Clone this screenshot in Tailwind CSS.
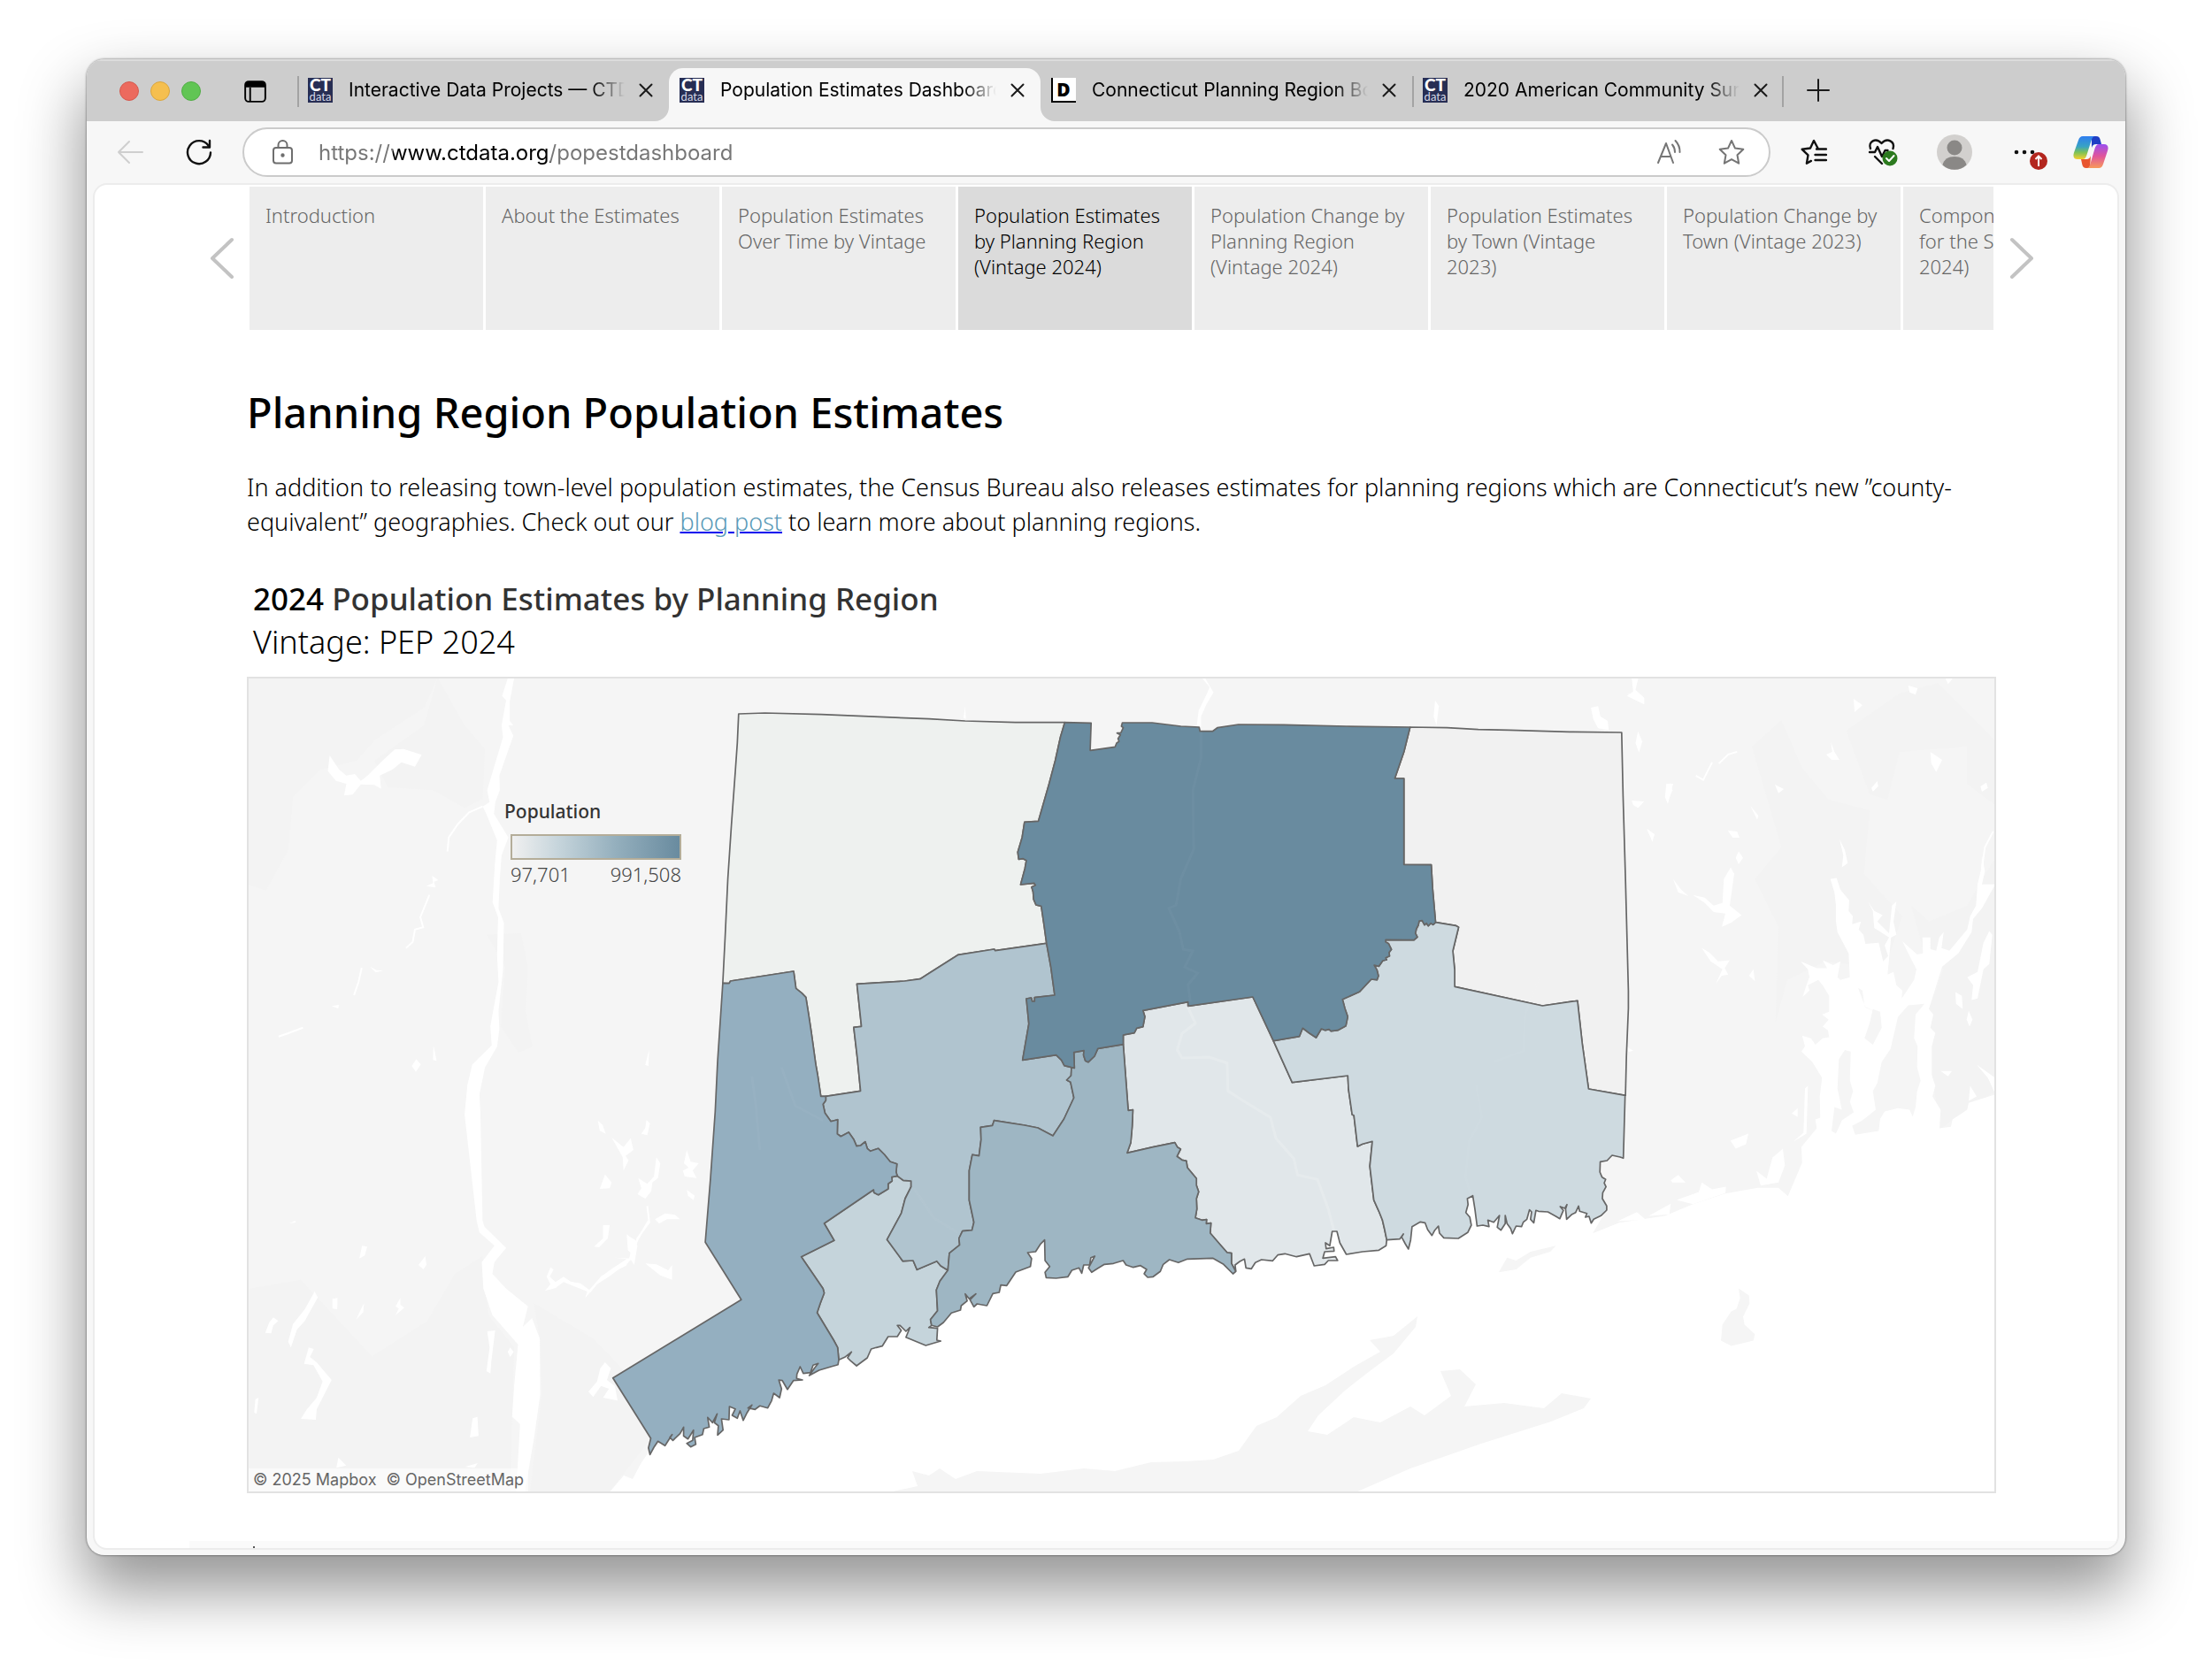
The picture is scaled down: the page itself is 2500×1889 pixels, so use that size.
<!DOCTYPE html>
<html lang="en">
<head>
    <meta charset="UTF-8">
    <meta name="viewport" content="width=device-width, initial-scale=1.0">
    <title>Population Estimates Dashboard</title>
    <script src="https://cdn.jsdelivr.net/npm/@tailwindcss/browser@4"></script>
</head>
<body class="bg-white min-h-screen px-[98px] pt-[67px] pb-[130px] text-black font-['Noto_Sans',sans-serif]">

    <!-- Shared icons -->
    <svg class="hidden" aria-hidden="true">
        <symbol id="icon-ctdata" viewBox="0 0 28 28">
            <rect width="28" height="28" fill="#272e54"/>
            <text x="14" y="15" text-anchor="middle" font-family="Lato, sans-serif" font-weight="900" font-size="19" fill="#fff">CT</text>
            <text x="14" y="26" text-anchor="middle" font-family="Lato, sans-serif" font-size="13" fill="#d5d8e6">data</text>
        </symbol>
        <symbol id="icon-close" viewBox="0 0 16 16">
            <path d="M1.5 1.5l13 13M14.5 1.5l-13 13" fill="none" stroke="#1a1a1a" stroke-width="2" stroke-linecap="round"/>
        </symbol>
    </svg>

    <div class="rounded-[20px] bg-[#f7f7f7] overflow-hidden shadow-[0_0_2px_1px_rgba(0,0,0,0.28),0_36px_70px_4px_rgba(0,0,0,0.42)]">

        <!-- Tab strip -->
        <header class="flex h-[70px] bg-[#cdcdcd] border-t-2 border-[#dcdcdc] font-[Inter,sans-serif] text-[21px]">
            <div class="flex items-center w-[238px] shrink-0 pl-[37px] gap-[13px]">
                <button aria-label="Close window" class="size-[22px] rounded-full bg-[#ec6a5e] border border-[#d5594e]"></button>
                <button aria-label="Minimize window" class="size-[22px] rounded-full bg-[#f5bf4f] border border-[#dba63c]"></button>
                <button aria-label="Zoom window" class="size-[22px] rounded-full bg-[#61c554] border border-[#51ad45]"></button>
                <button aria-label="Tab actions" class="ml-9">
                    <svg class="size-[25px]" viewBox="0 0 26 26" fill="none">
                        <rect x="1.2" y="1.2" width="23.6" height="23.6" rx="4" stroke="#000" stroke-width="2"/>
                        <path d="M1 8V5a4 4 0 0 1 4-4h16a4 4 0 0 1 4 4v3z" fill="#000"/>
                        <path d="M7 8v17" stroke="#000" stroke-width="2"/>
                    </svg>
                </button>
            </div>

            <nav class="flex flex-1 min-w-0" aria-label="Open tabs">
                <div class="relative flex items-center w-[420px] pl-3 pr-[18px] pb-0.5">
                    <span class="absolute left-0 top-[17px] w-0.5 h-[35px] bg-[#a3a3a3]"></span>
                    <svg class="size-7 shrink-0"><use href="#icon-ctdata"/></svg>
                    <a href="#" class="ml-[18px] flex-1 overflow-hidden whitespace-nowrap [mask-image:linear-gradient(to_right,black_88%,transparent)]">Interactive Data Projects — CTData</a>
                    <button aria-label="Close tab" class="ml-4"><svg class="size-4"><use href="#icon-close"/></svg></button>
                </div>
                <div class="relative flex items-center w-[420px] pl-3 pr-[18px] mt-2 pb-[10px] rounded-t-2xl bg-[#f7f7f7]">
                    <svg class="absolute -left-4 bottom-0 size-4" viewBox="0 0 16 16"><path d="M16 0v16H0A16 16 0 0 0 16 0z" fill="#f7f7f7"/></svg>
                    <svg class="absolute -right-4 bottom-0 size-4" viewBox="0 0 16 16"><path d="M0 0v16h16A16 16 0 0 1 0 0z" fill="#f7f7f7"/></svg>
                    <svg class="size-7 shrink-0"><use href="#icon-ctdata"/></svg>
                    <a href="#" aria-current="page" class="ml-[18px] flex-1 overflow-hidden whitespace-nowrap [mask-image:linear-gradient(to_right,black_88%,transparent)]">Population Estimates Dashboard</a>
                    <button aria-label="Close tab" class="ml-4"><svg class="size-4"><use href="#icon-close"/></svg></button>
                </div>
                <div class="flex items-center w-[420px] pl-3 pr-[18px] pb-0.5">
                    <svg class="size-7 shrink-0" viewBox="0 0 28 28">
                        <rect width="28" height="28" fill="#fff"/>
                        <path d="M0 0h2v26h26v2H0z" fill="#000"/>
                        <text x="14" y="21" text-anchor="middle" font-family="Open Sans, sans-serif" font-weight="800" font-size="21">D</text>
                    </svg>
                    <a href="#" class="ml-[18px] flex-1 overflow-hidden whitespace-nowrap [mask-image:linear-gradient(to_right,black_88%,transparent)]">Connecticut Planning Region Boundaries</a>
                    <button aria-label="Close tab" class="ml-4"><svg class="size-4"><use href="#icon-close"/></svg></button>
                </div>
                <div class="relative flex items-center w-[420px] pl-3 pr-[18px] pb-0.5">
                    <span class="absolute left-0 top-[17px] w-0.5 h-[35px] bg-[#a3a3a3]"></span>
                    <span class="absolute right-0 top-[17px] w-0.5 h-[35px] bg-[#a3a3a3]"></span>
                    <svg class="size-7 shrink-0"><use href="#icon-ctdata"/></svg>
                    <a href="#" class="ml-[18px] flex-1 overflow-hidden whitespace-nowrap [mask-image:linear-gradient(to_right,black_88%,transparent)]">2020 American Community Survey</a>
                    <button aria-label="Close tab" class="ml-4"><svg class="size-4"><use href="#icon-close"/></svg></button>
                </div>
                <button aria-label="New tab" class="ml-[26px] mb-0.5">
                    <svg class="size-[26px]" viewBox="0 0 26 26"><path d="M13 1v24M1 13h24" stroke="#1a1a1a" stroke-width="2" stroke-linecap="round"/></svg>
                </button>
            </nav>
        </header>

        <!-- Toolbar -->
        <div class="flex items-center h-[70px] pl-[34px] pr-[19px]">
            <button aria-label="Back" class="shrink-0">
                <svg class="size-[30px]" viewBox="0 0 30 30" fill="none" stroke="#cfcfcf" stroke-width="2" stroke-linecap="round" stroke-linejoin="round"><path d="M29 15H2M14 3L2 15l12 12"/></svg>
            </button>
            <button aria-label="Refresh" class="ml-12 shrink-0">
                <svg class="size-[30px]" viewBox="0 0 30 30" fill="none" stroke="#111" stroke-width="2.4" stroke-linecap="round" stroke-linejoin="round"><path d="M28 15.500A13 13 0 1 1 25.500 7.500M27 2v7.500h-7.500"/></svg>
            </button>
            <div class="ml-[34px] flex flex-1 items-center h-14 rounded-full border-2 border-[#cbcbcb] bg-white pl-[30px] pr-[27px]">
                <svg class="size-7 shrink-0" viewBox="0 0 28 28" fill="none" stroke="#6e6e6e" stroke-width="2">
                    <rect x="3" y="9" width="21" height="17.500" rx="3"/><path d="M8.500 9V6a5 5 0 0 1 10 0v3"/><circle cx="13.500" cy="17.500" r="1.200" fill="#6e6e6e"/>
                </svg>
                <input type="text" aria-label="Address" value="https://www.ctdata.org/popestdashboard" class="ml-[26px] pt-0.5 flex-1 min-w-0 outline-none font-[Inter,sans-serif] text-[24px] text-transparent bg-clip-text bg-[linear-gradient(to_right,#767676_84px,#000_84px,#000_262px,#767676_262px)]">
                <button aria-label="Read aloud">
                    <svg class="size-[30px]" viewBox="0 0 30 30" fill="none" stroke="#757575" stroke-width="2" stroke-linecap="round" stroke-linejoin="round"><path d="M2 27L11 5l8 22M5 20h11.500M18 6.500a13 13 0 0 1 3 8.500M21.500 2a18 18 0 0 1 5 13"/></svg>
                </button>
                <button aria-label="Add to favorites" class="ml-10">
                    <svg class="size-[30px]" viewBox="0 0 30 30" fill="none" stroke="#757575" stroke-width="2" stroke-linejoin="round"><path d="M15 2l4 8.600 9.300 1.200-6.800 6.500 1.700 9.400-8.200-4.600-8.200 4.600 1.700-9.400-6.800-6.500 9.300-1.200z"/></svg>
                </button>
            </div>
            <button aria-label="Favorites" class="ml-[34px] shrink-0">
                <svg class="size-[30px]" viewBox="0 0 30 30" fill="none" stroke="#111" stroke-width="2.400" stroke-linecap="round" stroke-linejoin="round"><path d="M19.500 10.500L15 2l-4 8.500-9.300 1.300 6.800 6.600-1.600 9.300 5-2.800M18 11.500h11M16.500 18H29M16.500 24H29"/></svg>
            </button>
            <button aria-label="Browser essentials" class="ml-[46px] shrink-0">
                <svg class="size-[34px]" viewBox="0 0 34 34" fill="none" stroke="#111" stroke-width="2.400" stroke-linecap="round" stroke-linejoin="round">
                    <path d="M3 13C0 5 9 0 15.500 7 22 0 31 5 28.500 13M8 22l8 8M2 17h6l3-6 5 11 3.500-7h3"/>
                    <circle cx="25" cy="24" r="8.500" fill="#2c7a1f" stroke="none"/><path d="M21 24l3 3 5.500-6" stroke="#fff" stroke-width="2"/>
                </svg>
            </button>
            <button aria-label="Profile" class="ml-11 shrink-0">
                <svg class="size-10" viewBox="0 0 40 40"><circle cx="20" cy="20" r="20" fill="#d2d0ce"/><circle cx="20" cy="15" r="8.500" fill="#8a8886"/><path d="M6.500 34.500C8 28 13 25 20 25s12 3 13.500 9.500A20 20 0 0 1 6.500 34.500z" fill="#8a8886"/></svg>
            </button>
            <button aria-label="Settings and more" class="ml-[46px] shrink-0">
                <svg class="size-10" viewBox="0 0 40 40"><g fill="#111"><circle cx="4" cy="20" r="2.300"/><circle cx="13" cy="20" r="2.300"/><circle cx="22" cy="20" r="2.300"/></g><circle cx="29" cy="30" r="10" fill="#b3261e"/><path d="M29 36V24.500M25.500 28l3.500-3.500 3.500 3.500" fill="none" stroke="#fff" stroke-width="2"/></svg>
            </button>
            <button aria-label="Copilot" class="ml-7 shrink-0">
                <svg class="size-10" viewBox="0 0 40 40">
                    <defs>
                        <linearGradient id="cp-a" x1="0" y1="0" x2="0" y2="1"><stop offset="0" stop-color="#2f7df0"/><stop offset=".45" stop-color="#38a3c4"/><stop offset=".7" stop-color="#7cc257"/><stop offset="1" stop-color="#f7cf2e"/></linearGradient>
                        <linearGradient id="cp-b" x1="0" y1="0" x2="0" y2="1"><stop offset="0" stop-color="#9b4ff0"/><stop offset=".5" stop-color="#e0559b"/><stop offset="1" stop-color="#f79a5a"/></linearGradient>
                    </defs>
                    <path d="M21 2h5c3 0 4 1.500 4.700 4l1.300 5h-6c-3 0-4 1.500-5 4z" fill="#1f3fc4"/>
                    <path d="M19 38h-4c-3 0-4-1.500-4.700-4L9 28h6c3 0 4-1.500 5-4z" fill="#e8552f"/>
                    <path d="M11 2h14c-2.500 0-3.600 2-4.500 5l-5 16c-1 3-2 5-5 5H5c-4 0-5.500-3-4-7.500L6 6.500C7 3.500 8.500 2 11 2z" fill="url(#cp-a)"/>
                    <path d="M29 38H15c2.500 0 3.600-2 4.500-5l5-17c1-3 2-5 5-5H35c4 0 5.500 3 4 7.500L34 33.500C33 36.500 31.500 38 29 38z" fill="url(#cp-b)"/>
                </svg>
            </button>
        </div>

        <!-- Page -->
        <main class="mx-[7px] mb-1.5 rounded-2xl bg-white border-2 border-[#ececec] overflow-hidden">
            <div class="pt-0.5 pl-[130px] pr-[92px]">

                <!-- Story navigator -->
                <nav class="flex items-center" aria-label="Story points">
                    <button aria-label="Previous" class="shrink-0 w-[45px]">
                        <svg class="w-7 h-12" viewBox="0 0 28 48" fill="none" stroke="#c3c3c3" stroke-width="4" stroke-linecap="round" stroke-linejoin="round"><path d="M25 3L3 24l22 21"/></svg>
                    </button>
                    <div class="flex flex-1 min-w-0 overflow-hidden gap-[3px] text-[22px] leading-[29px] font-light text-[#666] [&>button]:w-66 [&>button]:h-[162px] [&>button]:shrink-0 [&>button]:flex [&>button]:items-start [&>button]:text-left [&>button]:pl-[18px] [&>button]:pr-5 [&>button]:pt-[18px]">
                        <button class="bg-[#ededed]">Introduction</button>
                        <button class="bg-[#ededed]">About the Estimates</button>
                        <button class="bg-[#ededed]">Population Estimates Over Time by Vintage</button>
                        <button class="bg-[#dbdbdb] text-black" aria-current="true">Population Estimates by Planning Region (Vintage 2024)</button>
                        <button class="bg-[#ededed]">Population Change by Planning Region (Vintage 2024)</button>
                        <button class="bg-[#ededed]">Population Estimates by Town (Vintage 2023)</button>
                        <button class="bg-[#ededed]">Population Change by Town (Vintage 2023)</button>
                        <button class="bg-[#ededed] whitespace-nowrap"><span>Components of Change<br>for the State (Vintage<br>2024)</span></button>
                    </div>
                    <button aria-label="Next" class="shrink-0 w-[48px] pl-[18px]">
                        <svg class="w-7 h-12" viewBox="0 0 28 48" fill="none" stroke="#c3c3c3" stroke-width="4" stroke-linecap="round" stroke-linejoin="round"><path d="M3 3l22 21L3 45"/></svg>
                    </button>
                </nav>

                <div class="pl-[42px] pr-[45px]">
                    <h1 class="mt-[63px] text-[47px] leading-[60px] font-medium">Planning Region Population Estimates</h1>
                    <p class="mt-[35px] text-[27px] leading-[39px] font-light">In addition to releasing town-level population estimates, the Census Bureau also releases estimates for planning regions which are Connecticut’s new ”county-equivalent” geographies. Check out our <a href="#" class="text-[#5a9ab8] underline decoration-[#0000ee] decoration-2">blog post</a> to learn more about planning regions.</p>
                    <h2 class="mt-[43px] pl-[7px] text-[35px] leading-[49px] font-medium text-[#333]"><span class="text-black">2024</span> Population Estimates by Planning Region<span class="block text-[36px] font-light text-black">Vintage: PEP 2024</span></h2>

                    <!-- Map -->
                    <div class="relative mt-[15px]">
                        <svg id="map" class="w-full h-auto block" viewBox="279 765 1977 923" role="img" aria-label="Map of Connecticut planning regions shaded by population">
                            <rect x="279" y="765" width="1977" height="923" fill="#f5f5f5"/>
                            <g id="shade" fill="#f3f3f3"></g>
                            <g id="water" fill="#fff"></g>
                            <g id="land" fill="#f5f5f5"></g>
                            <g id="streams" fill="none" stroke="#fff" stroke-width="2"></g>
                            <g id="regions" stroke="#666" stroke-width="1.7" stroke-linejoin="round"></g>
                            <g id="overlay" fill="none" stroke="#fff" stroke-opacity=".03" stroke-width="3"></g>
                            <rect x="280" y="766" width="1975" height="921" fill="none" stroke="#e2e2e2" stroke-width="2"/>
                        </svg>
                        <div class="absolute left-[291px] top-[138px] w-[200px] text-[#444]">
                            <h3 class="text-[21px] leading-7 font-medium text-[#333]">Population</h3>
                            <div class="mt-3 ml-[7px] h-[29px] border-2 border-[#b4ad99] bg-[linear-gradient(to_right,#f0f0f0,#c5d4db_28%,#94afbd_62%,#698b9f)]"></div>
                            <div class="ml-[7px] mt-0.5 flex justify-between text-[22px] leading-7 font-light"><span>97,701</span><span>991,508</span></div>
                        </div>
                        <p class="absolute left-0.5 bottom-0.5 bg-white/60 px-[5px] text-[18px] leading-[26px] text-[#666] font-[Inter,sans-serif] whitespace-nowrap flex gap-[11px]"><a href="#">© 2025 Mapbox</a><a href="#">© OpenStreetMap</a></p>
                    </div>
                </div>
            </div>
            <div class="mt-[54px] ml-[107px] pl-[72px] pt-1.5 h-2 bg-[#fafafa]"><div class="size-0.5 bg-[#555]"></div></div>
        </main>
    </div>

    <script>
        // Survey sheets: each has its own origin and units per pixel
        const SHEETS = {
            A: [270, 760, 1.96, 3],
            B: [1050, 760, 1.8447, 3],
            C: [640, 1200, 2.24, 3],
            D: [1240, 1100, 2.45, 3],
            E: [1780, 760, 3, 1.668],
            F: [90, 1380, 2.24, 3],
            M: [0, 0, 1, 1]
        };

        // "A 1,2 3,4 B 5,6" -> list of map points
        function points(text) {
            let sheet = SHEETS.M;
            const list = [];
            text.trim().split(/\s+/).forEach(token => {
                if (SHEETS[token]) { sheet = SHEETS[token]; return; }
                const [x, y] = token.split(',').map(Number);
                list.push([sheet[0] + x / sheet[2], sheet[1] + y / sheet[3]]);
            });
            return list;
        }

        // Borders, shared between neighbouring regions
        const ARCS = {
            nwWest: 'A 1072,1054 1077,900 1083,700 1091,520 1100,330 1104,240 1107,141',
            nwTop: 'A 1107,141 1165,138 1290,143 B 0,158 75,165 180,170 283,170',
            capNw: 'B 283,170 274,220 263,300 250,380 228,505 199,508 194,560 185,610 187,634 196,632 203,638 200,665 191,720 219,715 222,722 214,728 217,745 218,770 223,789 234,793 240,860 245,919',
            nauNw: 'B 245,919 138,944 136,939 61,958 0,1021 A 1509,1040 1475,1047 1369,1057 1379,1201 1362,1204 1370,1310 1377,1420 1300,1438',
            westNw: 'A 1300,1438 1289,1438 1282,1365 1278,1330 1268,1220 1262,1160 1256,1102 1247,1088 1234,1072 1229,1014 1089,1047 1086,1055 1072,1054',
            capTop: 'B 283,170 338,172 336,265 388,253 391,240 396,235 394,225 399,212 392,206 400,205 405,188 401,183 403,171 465,171 525,183 563,186 565,200 591,200 601,188 645,177 740,178 870,183 1003,186',
            capNe: 'B 1003,186 990,270 971,360 990,360 990,652 1047,653 1050,735 1056,848',
            capSe: 'B 1056,848 1051,856 1046,851 1041,860 1037,851 1033,857 1028,842 1022,843 1020,858 1016,870 1014,885 1018,898 1011,908 952,907 952,914 958,920 964,940 959,950 960,962 952,968 954,975 946,978 938,997 928,993 934,1010 937,1030 934,1043 922,1041 897,1084 862,1109 867,1140 873,1168 869,1199 852,1214 838,1217 834,1211 826,1214 818,1209 807,1239 793,1224 779,1207 772,1235 718,1250',
            capLcr: 'B 718,1250 675,1101 540,1132 540,1118 446,1147 450,1168 446,1202 433,1207 428,1223 405,1230 405,1262',
            capSc: 'B 405,1262 352,1276 345,1302 332,1322 326,1318 322,1298 323,1283 302,1289 303,1342 297,1340',
            capNau: 'B 297,1340 282,1334 276,1315 265,1298 195,1315 208,1192 203,1107 213,1104 215,1116 220,1116 220,1103 262,1095 254,1000 245,919',
            neOuter: 'B 1003,186 1080,188 1145,194 1210,196 1335,202 1444,204 1447,420 1452,700 1458,1080 1458,1140 1454,1300 1452,1435',
            neSe: 'B 1452,1435 1375,1413 1362,1260 1352,1114 1279,1131 1096,1066 1096,1010 1092,945 1104,865 1098,859 1056,848',
            seCoast: 'D 1462,415 1457,628 1448,624 1426,618 1412,636 1393,640 1392,675 1398,692 1408,700 1404,712 1409,725 1400,745 1399,765 1411,790 1411,804 1395,823 1375,835 1368,848 1362,825 1352,828 1356,815 1336,808 1333,790 1325,812 1315,818 1300,835 1297,800 1301,785 1295,798 1282,792 1291,805 1281,833 1270,825 1248,810 1222,808 1215,805 1209,847 1200,835 1203,810 1197,803 1190,835 1180,845 1175,860 1160,858 1150,884 1145,866 1135,850 1130,822 1130,850 1118,872 1108,862 1114,822 1098,845 1082,838 1085,860 1068,855 1052,858 1046,800 1040,755 1025,765 1027,785 1021,812 1032,828 1036,855 1026,880 1000,900 960,898 948,882 945,858 935,872 927,890 915,870 908,847 895,844 872,860 868,905 862,936 853,918 843,895 848,885 838,902 802,905',
            seLcr: 'B 718,1250 D 540,371 694,348 696,395 706,480 711,483 721,588 735,580 762,571 755,655 766,770 780,808 790,838 796,870 802,905',
            lcrCoast: 'D 802,905 800,925 780,940 735,945 690,954 672,915 664,876 651,876 644,925 632,915 634,935 655,930 656,943 630,945 625,967 660,962 666,975 640,975 630,988 601,993 588,952 552,962 520,952 500,956 486,976 455,972 438,982 427,1003 412,1000 408,970 395,978 382,990 384,1010 372,985',
            lcrSc: 'B 405,1262 D 86,466 99,464 97,520 93,575 83,610 155,590 215,575 222,590 231,597 221,622 235,634 247,637 250,660 275,697 275,720 281,742 275,765 276,800 272,830 290,838 303,836 302,850 315,848 313,882 340,920 360,948 372,950 372,985',
            scCoast: 'D 372,985 384,1012 376,1020 350,988 320,967 250,970 225,982 200,972 183,988 175,1012 155,1030 140,1032 130,1020 137,1005 120,992 100,998 80,990 72,975 45,985 20,988 0,1003 C 1330,715 1322,700 1338,660 1328,665 1325,690 1310,690 1305,718 1298,700 1280,708 1270,730 1240,735 1215,733 1212,715 1224,695 1212,675 1211,605 1200,620 1188,645 1168,648 1178,668 1175,695 1138,714 1115,760 1100,758 1096,783 1080,787 1065,828 1040,822 1032,832 1022,808 1037,788 1020,805 1010,788 1015,812 1000,828 998,843 975,853 955,885 940,900 925,895',
            scNau: 'B 297,1340 296,1368 287,1383 295,1390 302,1443 C 1260,195 1232,252 1194,225 1160,216 1083,200 1079,217 1049,223 1050,265 1045,320 1028,316 1020,370 1020,470 1032,545 1027,572 1003,575 994,600 996,622 970,650 968,680 966,708',
            scGb: 'C 966,708 946,745 937,775 940,845 922,875 925,895',
            gbCoast: 'C 925,895 918,902 940,905 938,945 948,948 910,963 860,935 870,902 860,915 845,895 838,895 848,912 838,933 815,933 800,965 785,970 772,975 762,1005 735,1032 720,1015 712,1005 722,985 705,1003 690,1012',
            gbWest: 'C 690,1012 687,970 677,945 635,852 643,820 653,785 650,770 595,662 678,607 653,549 778,435 779,445 790,452 815,432 815,415 825,405 824,392 838,388',
            gbNau: 'C 838,388 853,403 873,405 873,425 858,465 848,515 812,604 852,677 878,675 888,706 938,677 948,693 966,708',
            westNau: 'A 1300,1438 C 657,132 650,145 655,175 670,203 687,197 686,245 695,254 715,240 728,265 735,287 745,285 757,272 762,295 770,304 790,295 805,315 820,340 837,347 835,375 838,388',
            westCoast: 'C 690,1012 688,1028 670,1035 640,1047 615,1065 628,1040 638,1024 625,1030 618,1055 600,1058 592,1035 584,1060 583,1075 598,1080 575,1082 560,1112 547,1082 538,1080 545,1110 540,1140 525,1125 520,1150 510,1175 490,1168 478,1180 460,1175 470,1165 458,1190 448,1217 440,1185 433,1210 420,1200 428,1178 413,1170 412,1215 393,1212 397,1250 383,1267 385,1235 375,1225 382,1195 370,1225 358,1207 362,1240 348,1245 345,1265 325,1275 328,1298 315,1307 305,1295 320,1285 322,1250 308,1280 297,1270 297,1240 288,1262 270,1285 262,1275 268,1265 250,1303 232,1288 222,1308 212,1333 208,1310 214,1278 118,1073 443,808 352,613 365,400 377,170 383,0 A 1072,1054'
        };

        // A leading minus walks the border backwards
        const REGIONS = [
            { name: 'Northwest Hills', fill: '#eef1ef', arcs: ['nwWest', 'nwTop', 'capNw', 'nauNw', 'westNw'] },
            { name: 'Northeastern', fill: '#f1f1f1', arcs: ['neOuter', 'neSe', '-capNe'] },
            { name: 'Lower Connecticut River Valley', fill: '#e1e7ea', arcs: ['seLcr', 'lcrCoast', '-lcrSc', '-capLcr'] },
            { name: 'Southeastern', fill: '#cedae0', arcs: ['seCoast', '-seLcr', '-capSe', '-neSe'] },
            { name: 'Greater Bridgeport', fill: '#c5d4db', arcs: ['gbWest', 'gbNau', 'scGb', 'gbCoast'] },
            { name: 'Naugatuck Valley', fill: '#b0c4cf', arcs: ['nauNw', 'westNau', 'gbNau', '-scNau', 'capNau'] },
            { name: 'South Central', fill: '#9eb6c3', arcs: ['lcrSc', 'scCoast', '-scGb', '-scNau', '-capSc'] },
            { name: 'Western', fill: '#94afc0', arcs: ['westNw', '-westCoast', 'gbWest', '-westNau'] },
            { name: 'Capitol', fill: '#698b9f', arcs: ['capTop', 'capNe', 'capSe', 'capLcr', 'capSc', 'capNau', '-capNw'] }
        ];

        const SHADE = [
            'A 20,18 440,18 410,120 300,230 260,300 180,330 120,420 110,600 60,740 20,720',
            'A 440,18 500,180 545,260 540,430 500,460 430,400 330,390 300,300 410,180',
            'A 550,890 625,885 640,1000 635,1150 650,1270 620,1290 580,1200 590,1000',
            'F 430,230 560,200 740,460 880,340 950,180 1020,120 1035,320 1100,430 1090,920 430,920',
            'F 1150,280 1300,400 1400,540 1445,740 1340,920 1140,920 1170,590 1165,400',
            'E 600,140 700,90 770,180 860,240 1000,260 980,380 1110,460 1050,560 850,545 720,580 680,660 690,480 610,390 700,330',
            'E 920,110 1100,40 1230,20 1425,130 1425,250 1330,210 1330,140 1100,150 1060,240 1000,230',
            'E 1140,440 1200,470 1330,440 1425,350 1425,790 1240,860 1210,760 1200,635 1250,560 1180,520'
        ];

        const WATER = [
            // Long Island Sound, Narragansett Bay and the ocean
            'M 688,1688 705,1668 715,1672 724,1655 734,1640 780,1610 880,1530 945,1515 1020,1480 1062,1480 1090,1450 1150,1415 1180,1395 1200,1395 1300,1415 1370,1405 1400,1400 1500,1385 1510,1380 1560,1385 1600,1365 1664,1340 1750,1350 1798,1360 E 108,1013 60,1058 150,1038 245,1030 305,1025 400,1003 510,983 620,972 690,972 722,988 770,925 768,895 820,860 815,843 832,840 830,800 838,765 805,735 768,715 780,705 770,685 800,690 815,702 840,690 862,688 858,675 840,668 860,655 838,645 862,640 862,610 840,590 825,580 790,590 795,600 772,612 785,590 795,575 790,560 765,545 820,558 855,558 840,543 875,552 900,545 890,575 900,580 932,575 928,530 890,490 885,470 885,440 880,415 866,390 887,388 900,410 930,430 928,450 942,460 940,475 970,470 962,485 978,495 985,512 1030,510 1045,545 1062,535 1050,515 1065,500 1015,482 1010,450 993,432 1015,450 1043,458 1025,470 1065,492 1075,440 1090,432 1080,470 1090,495 1072,500 1060,570 1080,565 1090,590 1110,600 1108,615 1150,580 1158,560 1142,543 1110,507 1160,532 1180,530 1178,500 1205,500 1205,522 1225,525 1235,500 1250,490 1243,520 1270,525 1330,485 1340,460 1360,440 1365,400 1378,370 1380,345 1390,375 1380,400 1425,400 1380,445 1350,465 1345,490 1300,530 1245,555 1200,635 1215,645 1205,670 1222,680 1210,705 1210,760 1222,780 1212,800 1240,825 1236,860 1275,857 1280,843 1330,825 1335,812 1420,797 1428,797 1428,1550 M 2256,1688',
            // Hudson
            'A 596,18 583,80 592,95 582,180 585,220 550,400 555,440 540,455 548,480 572,570 567,650 562,780 574,830 572,960 575,1050 557,1200 560,1265 517,1330 506,1400 500,1500 F 1005,0 1012,40 1050,85 1018,140 1022,230 1045,320 1110,420 1100,560 1095,665 1115,690 1105,920 1127,920 1150,740 1166,590 1165,400 1145,330 1122,360 1135,290 1080,230 1045,180 1050,140 1080,92 1025,20 1020,0 A 535,1500 533,1430 545,1340 572,1270 577,1210 575,1150 585,1010 587,850 575,800 578,700 582,620 597,560 565,480 568,440 578,400 577,350 608,215 597,180 608,180 600,165 600,100 610,18',
            'A 201,282 222,330 238,350 257,345 270,368 285,350 318,300 345,262 365,260 405,280 390,320 360,305 340,330 312,350 315,395 300,382 270,380 252,415 233,418 238,378 215,368 197,335',
            'A 393,1312 403,1330 392,1355 383,1335', 'A 431,1265 438,1318 430,1315', 'A 909,1278 907,1335 900,1332',
            'A 428,690 442,705 432,710 436,730 415,725 430,715', 'A 290,998 305,1010 320,1012 303,1018', 'A 205,1132 222,1128 220,1140',
            'F 715,85 728,88 722,118 708,128', 'F 875,120 878,150 870,165 858,150', 'F 595,240 603,260 570,340 550,370 535,430 528,410 540,350 570,300',
            'F 640,265 653,262 652,300 640,298', 'F 720,280 718,310 700,335 712,300', 'F 812,262 812,285 822,295 800,320 808,298 800,290',
            'F 490,328 503,340 490,355 485,382 470,380 480,345', 'F 580,430 593,435 583,462 600,480 638,540 615,600 600,640 598,675 560,672 575,640 600,600 615,545 592,490 568,485',
            'F 445,605 453,600 448,655 442,650', 'F 1032,375 1052,372 1042,480 1040,518 1030,510 1038,430', 'F 1090,430 1099,445 1090,462 1084,445',
            'F 995,670 1007,665 1010,730 988,735', 'F 655,803 675,830 650,838', 'F 975,835 1008,822 1000,838', 'F 530,10 545,0 548,5',
            'F 1325,15 1342,15 1337,60 1315,90 1302,88 1325,60', 'F 1192,158 1200,165 1190,190 1205,208 1225,190 1245,208 1270,215 1290,235 1320,190 1345,165 1385,130 1352,125 1400,128 1370,160 1340,190 1310,215 1280,262 1285,240 1225,208 1205,228 1178,238 1192,215 1182,190',
            'F 1432,145 1460,148 1490,168 1500,150 1500,200 1470,185', 'F 1330,480 1345,500 1335,540 1355,560 1362,610 1325,600 1340,570 1320,560 1300,598 1288,580 1310,545 1318,500',
            'F 1385,45 1397,60 1410,95 1400,115 1388,100',
            'C 115,258 145,290 163,260 170,300 150,320 158,335 145,370 143,325', 'C 80,200 92,215 100,245 85,235', 'C 203,198 212,210 205,250 190,245 200,225',
            'C 228,325 238,345 232,395 218,410 215,440 200,465 180,450 190,430 182,395 205,415 222,390', 'C 305,300 315,340 335,345 320,370 330,395 300,390 295,370 310,360 298,345', 'C 98,383 115,410 110,430 85,432', 'C 305,435 325,455 322,470 308,455',
            'C 225,535 250,515 275,520 288,535 255,535 235,550', 'C 155,590 175,605 180,625 172,690 160,665 165,630',
            'B 575,18 593,68 578,110 567,150 567,184 558,184 562,130 580,70 585,50 570,22', 'B 75,115 77,158 72,155', 'B 1055,95 1063,115 1058,180 1052,150', 'B 1380,120 1395,115 1400,150 1415,165 1417,196 1395,190 1385,160', 'B 1465,18 1478,22 1473,60 1490,85 1490,108 1455,80 1468,65', 'B 1478,200 1487,235 1480,272 1473,240', 'B 1465,435 1490,438 1478,460 1468,450',
            'B 1545,375 1550,400 1540,440 1535,420', 'B 1498,530 1512,552 1508,575', 'B 1455,1270 1468,1283 1458,1288',
            'E 192,10 215,12 205,28', 'E 310,210 333,210 315,248 305,235', 'E 195,245 235,243 215,255', 'E 243,295 270,305 262,318', 'E 333,390 360,410 385,422 350,415',
            'E 400,420 440,425 470,440 500,435 505,390 528,368 540,380 525,440 565,458 530,472 498,480 510,455 470,452 440,435',
            'E 430,520 455,528 485,545 525,543 508,558 520,570 498,572 478,587 500,560 460,545', 'E 545,350 555,338 570,350 555,362', 'E 518,298 550,300 558,312 535,312', 'E 595,252 622,270 618,278', 'E 590,572 605,560 610,582',
            'E 945,50 975,62 948,75', 'E 868,132 880,150 897,165 870,165 852,155 872,150', 'E 1205,150 1245,165 1225,188 1208,172', 'E 1130,25 1162,30 1155,42 1135,38', 'E 1255,10 1280,12 1265,22', 'E 678,212 708,220 690,228', 'E 1005,218 1025,205 1028,215 1010,225', 'E 1375,215 1395,208 1400,218 1380,225',
            'E 897,315 915,335 925,360 905,368 910,345', 'E 527,883 588,870 580,890 545,898', 'E 325,958 350,948 375,962 330,962', 'E 345,995 420,980 430,962 465,975 512,970 510,982 400,1003', 'E 145,1035 210,1018 240,1032', 'E 250,1025 325,1002 320,1022',
            'E 615,940 650,955 670,915 705,898 712,930 690,962 630,968', 'E 735,832 755,822 755,838', 'E 780,785 790,780 785,870 740,885 775,868',
            'E 1405,488 1415,495 1405,550 1385,560 1365,615 1345,618 1350,590 1330,575 1365,565 1385,510', 'E 1290,603 1312,610 1315,635 1292,625', 'E 1335,638 1348,655 1338,668 1328,655', 'E 1240,752 1278,752 1265,762', 'E 1362,740 1425,765 1425,795 1400,765', 'E 1340,780 1362,800 1335,808',
            'E 178,40 235,48 235,60 205,50'
        ];

        const LAND = [
            // Aquidneck, Conanicut, Prudence
            'E 1130,628 1185,625 1155,645 1150,690 1162,705 1160,745 1172,770 1160,790 1155,820 1145,838 1135,825 1095,822 1050,828 1035,842 1030,865 950,872 940,855 975,845 1020,825 1010,790 1025,775 1040,735 1070,710 1095,650',
            'E 915,712 935,715 932,770 943,790 932,810 945,830 905,845 885,870 870,865 880,820 905,825 890,785 895,730', 'E 1010,635 1035,640 1040,670 1010,702 982,690 1000,660', 'E 960,595 975,600 982,630 1020,640 985,632',
            // Long Island
            'M 1000,1688 1037,1680 1031,1663 1050,1668 1062,1660 1080,1672 1104,1663 1176,1666 1225,1660 1260,1663 1301,1653 1340,1652 1371,1650 1400,1640 1420,1612 1443,1602 1470,1578 1498,1566 1530,1545 1560,1528 1548,1515 1575,1510 1602,1488 1600,1500 1575,1530 1548,1550 1520,1572 1490,1600 1478,1618 1500,1622 1530,1602 1560,1608 1594,1590 1610,1600 1640,1578 1628,1550 1650,1548 1668,1565 1655,1590 1700,1586 1745,1592 1765,1575 1798,1581 1790,1592 1753,1607 1674,1632 1594,1660 1530,1688',
            // Block Island, Fishers Island
            'E 555,1162 590,1175 592,1190 570,1215 575,1230 610,1248 605,1260 530,1270 495,1260 500,1230 530,1205 548,1200 560,1180',
            'D 1112,1015 1135,965 1160,975 1200,945 1270,925 1255,945 1200,965 1160,1005'
        ];

        const STREAMS = [
            'A 540,455 510,475 485,515 465,560 462,608', 'A 422,755 402,830 408,865 390,872 385,915 370,935', 'A 272,1003 265,1050 255,1095', 'A 88,1235 108,1225 142,1205',
            'C 205,490 210,545 180,600 170,650 150,690 90,730 60,780 35,755 0,748', 'E 410,195 435,203 465,170', 'E 488,172 520,155 550,150', 'E 1380,370 1390,330 1418,300', 'F 1440,0 1410,70 1395,120'
        ];

        const OVERLAY = [
            'B 567,200 567,290 550,400 552,600 525,700 515,790 500,800 522,880 530,940 550,945 533,1000 560,1020 540,1060 545,1118',
            'C 545,20 580,150 650,200', 'C 470,50 480,150 490,300', 'C 880,430 930,530 990,580', 'D 1050,380 1065,490 1030,570 1020,690 1035,755', 'D 1225,10 1185,140 1180,265 1100,300'
        ];
        const LCR_RIVER = 'D 250,113 272,170 235,205 222,260 235,288 310,285 360,305 362,400 400,430 480,490 495,560 545,630 555,685 610,700 640,800 655,870';

        function addPath(groupId, list, closed) {
            const path = document.createElementNS('http://www.w3.org/2000/svg', 'path');
            path.setAttribute('d', 'M' + list.map(p => p[0].toFixed(1) + ' ' + p[1].toFixed(1)).join('L') + (closed ? 'Z' : ''));
            document.getElementById(groupId).appendChild(path);
            return path;
        }

        SHADE.forEach(s => addPath('shade', points(s), true));
        WATER.forEach(s => addPath('water', points(s), true));
        LAND.forEach(s => addPath('land', points(s), true));
        STREAMS.forEach(s => addPath('streams', points(s), false));
        OVERLAY.forEach(s => addPath('overlay', points(s), false));
        addPath('overlay', points(LCR_RIVER), false).setAttribute('stroke-opacity', '.18');

        REGIONS.forEach(region => {
            const outline = region.arcs.flatMap(name => name[0] === '-' ? points(ARCS[name.slice(1)]).reverse() : points(ARCS[name]));
            const path = addPath('regions', outline, true);
            path.setAttribute('fill', region.fill);
            path.setAttribute('aria-label', region.name);
        });
    </script>

</body>
</html>
